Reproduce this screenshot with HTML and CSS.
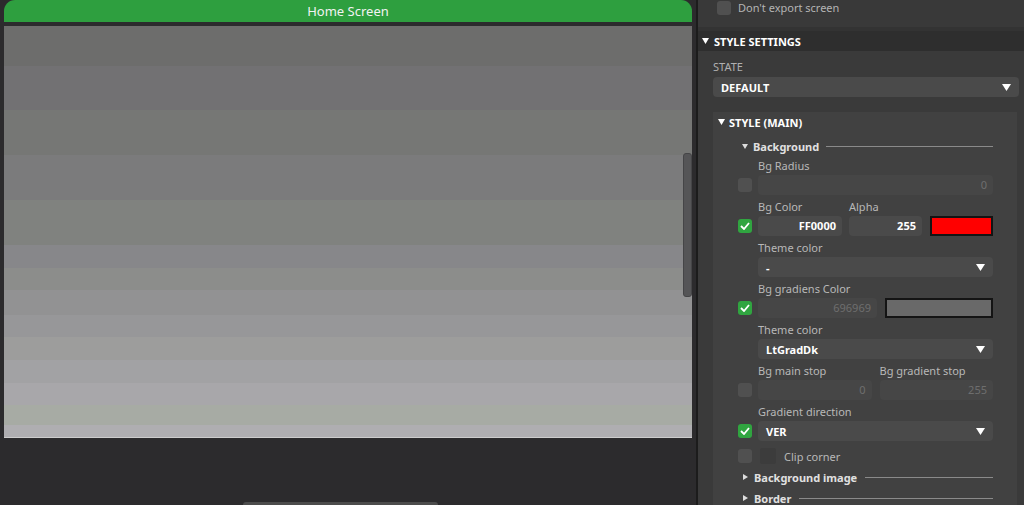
FILE: index.html
```html
<!DOCTYPE html>
<html lang="en">
<head>
    <meta charset="UTF-8">
    <title>Screen Editor</title>
    <link rel="stylesheet" href="styles.css">
</head>
<body>

    <!-- Preview area -->
    <div class="stage">
        <div class="screen-title">Home Screen</div>
        <div class="screen-canvas"></div>
        <div class="vscroll"></div>
        <div class="hscroll"></div>
    </div>

    <div class="divider"></div>

    <!-- Properties panel -->
    <div class="panel">
        <div class="export-row">
            <span class="check"></span>
            <span class="export-label">Don't export screen</span>
        </div>

        <div class="section-head">
            <svg class="tri" width="7" height="6" viewBox="0 0 7 6"><polygon points="0,0 7,0 3.5,6" fill="#fff"/></svg>
            <span>STYLE SETTINGS</span>
        </div>

        <div class="section-body">
            <div class="state-label">STATE</div>
            <div class="select state-select">
                <span>DEFAULT</span>
                <svg width="9" height="7" viewBox="0 0 9 7"><polygon points="0,0 9,0 4.5,7" fill="#fff"/></svg>
            </div>

            <div class="style-box">
                <div class="style-head">
                    <svg class="tri" width="7" height="6" viewBox="0 0 7 6"><polygon points="0,0 7,0 3.5,6" fill="#fff"/></svg>
                    <span>STYLE (MAIN)</span>
                </div>

                <div class="group-head">
                    <svg class="tri" width="6" height="5" viewBox="0 0 6 5"><polygon points="0,0 6,0 3,5" fill="#ddd"/></svg>
                    <span>Background</span>
                    <div class="rule"></div>
                </div>

                <!-- Bg Radius -->
                <div class="field first">
                    <span class="check"></span>
                    <div class="cells">
                        <div class="cell">
                            <div class="label">Bg Radius</div>
                            <div class="input dim">0</div>
                        </div>
                    </div>
                </div>

                <!-- Bg Color -->
                <div class="field">
                    <span class="check on">
                        <svg width="10" height="8" viewBox="0 0 10 8"><polyline points="1,4 4,7 9,1" fill="none" stroke="#fff" stroke-width="1.8"/></svg>
                    </span>
                    <div class="cells">
                        <div class="cell w-hex">
                            <div class="label">Bg Color</div>
                            <div class="input">FF0000</div>
                        </div>
                        <div class="cell w-alpha">
                            <div class="label">Alpha</div>
                            <div class="input">255</div>
                        </div>
                        <div class="cell grow">
                            <div class="label"></div>
                            <div class="swatch red"></div>
                        </div>
                    </div>
                </div>

                <!-- Theme color -->
                <div class="field">
                    <span></span>
                    <div class="cells">
                        <div class="cell">
                            <div class="label">Theme color</div>
                            <div class="select">
                                <span>-</span>
                                <svg width="9" height="7" viewBox="0 0 9 7"><polygon points="0,0 9,0 4.5,7" fill="#fff"/></svg>
                            </div>
                        </div>
                    </div>
                </div>

                <!-- Bg gradient color -->
                <div class="field">
                    <span class="check on">
                        <svg width="10" height="8" viewBox="0 0 10 8"><polyline points="1,4 4,7 9,1" fill="none" stroke="#fff" stroke-width="1.8"/></svg>
                    </span>
                    <div class="cells">
                        <div class="cell w-grad">
                            <div class="label">Bg gradiens Color</div>
                            <div class="input dim">696969</div>
                        </div>
                        <div class="cell grow">
                            <div class="label"></div>
                            <div class="swatch gray"></div>
                        </div>
                    </div>
                </div>

                <!-- Theme color 2 -->
                <div class="field">
                    <span></span>
                    <div class="cells">
                        <div class="cell">
                            <div class="label">Theme color</div>
                            <div class="select">
                                <span>LtGradDk</span>
                                <svg width="9" height="7" viewBox="0 0 9 7"><polygon points="0,0 9,0 4.5,7" fill="#fff"/></svg>
                            </div>
                        </div>
                    </div>
                </div>

                <!-- Stops -->
                <div class="field">
                    <span class="check"></span>
                    <div class="cells">
                        <div class="cell">
                            <div class="label">Bg main stop</div>
                            <div class="input dim">0</div>
                        </div>
                        <div class="cell">
                            <div class="label">Bg gradient stop</div>
                            <div class="input dim">255</div>
                        </div>
                    </div>
                </div>

                <!-- Gradient direction -->
                <div class="field">
                    <span class="check on">
                        <svg width="10" height="8" viewBox="0 0 10 8"><polyline points="1,4 4,7 9,1" fill="none" stroke="#fff" stroke-width="1.8"/></svg>
                    </span>
                    <div class="cells">
                        <div class="cell">
                            <div class="label">Gradient direction</div>
                            <div class="select">
                                <span>VER</span>
                                <svg width="9" height="7" viewBox="0 0 9 7"><polygon points="0,0 9,0 4.5,7" fill="#fff"/></svg>
                            </div>
                        </div>
                    </div>
                </div>

                <!-- Clip corner -->
                <div class="clip-row">
                    <span class="check"></span>
                    <span class="clip-box"></span>
                    <span class="clip-label">Clip corner</span>
                </div>

                <div class="group-head closed">
                    <svg class="tri" width="5" height="6" viewBox="0 0 5 6"><polygon points="0,0 5,3 0,6" fill="#ddd"/></svg>
                    <span>Background image</span>
                    <div class="rule"></div>
                </div>
                <div class="group-head closed">
                    <svg class="tri" width="5" height="6" viewBox="0 0 5 6"><polygon points="0,0 5,3 0,6" fill="#ddd"/></svg>
                    <span>Border</span>
                    <div class="rule"></div>
                </div>
            </div>
        </div>
    </div>

</body>
</html>
```

FILE: styles.css
```css
/* Global */
* {
    margin: 0;
    padding: 0;
    box-sizing: border-box;
    font-family: 'Noto Sans', 'Open Sans', sans-serif;
}

body {
    background: #2c2b2d;
    display: flex;
    height: 505px;
    overflow: hidden;
}

/* PREVIEW */
.stage {
    position: relative;
    width: 696px;
    padding: 0 4px;
}

.screen-title {
    height: 22px;
    background: #2e9f3f;
    border-radius: 11px 11px 0 0;
    color: #f2f2f2;
    font-size: 13px;
    line-height: 22px;
    text-align: center;
}

.screen-canvas {
    margin-top: 4px;
    height: 412px;
    border-bottom: 1px solid #cdcdcd;
    background: linear-gradient(to bottom,
        #6d6d6c 0, #6d6d6c 40px,
        #727173 40px, #727173 84px,
        #767775 84px, #767775 129px,
        #7b7b7c 129px, #7b7b7c 174px,
        #80827f 174px, #80827f 219px,
        #87878a 219px, #87878a 242px,
        #8c8d8b 242px, #8c8d8b 264px,
        #929293 264px, #929293 289px,
        #979799 289px, #979799 311px,
        #9d9d9c 311px, #9d9d9c 334px,
        #a2a2a4 334px, #a2a2a4 357px,
        #a8a7aa 357px, #a8a7aa 379px,
        #a7aba4 379px, #a7aba4 399px,
        #afaeb1 399px);
}

.vscroll {
    position: absolute;
    left: 683px;
    top: 153px;
    width: 9px;
    height: 144px;
    background: #555557;
    border: 1px solid #454547;
    border-radius: 3px;
}

.hscroll {
    position: absolute;
    left: 243px;
    top: 502px;
    width: 195px;
    height: 6px;
    background: #4c4c4c;
    border-radius: 3px;
}

.divider {
    width: 2px;
    background: #1c1c1c;
}

/* PANEL */
.panel {
    flex: 1;
    background: #3a3a3a;
    color: #b8b8b8;
    font-size: 11px;
    overflow: hidden;
}

.export-row {
    height: 31px;
    display: flex;
    align-items: flex-start;
    gap: 7px;
    padding: 1px 0 0 19px;
    background: linear-gradient(to bottom, #393939 0, #393939 27px, #333 27px);
}

.export-label {
    font-size: 11px;
    line-height: 14px;
    color: #b4b4b4;
}

.section-head {
    height: 20px;
    background: #2e2e2e;
    display: flex;
    align-items: center;
    gap: 5px;
    padding-left: 4px;
    color: #fff;
    font-weight: 700;
    font-size: 11px;
}

.section-body {
    padding: 9px 5px 0 15px;
}

.state-label {
    height: 14px;
    line-height: 14px;
    color: #b0b0b0;
}

/* SELECTS AND INPUTS */
.select {
    height: 20px;
    background: #4a4a4a;
    border-radius: 4px;
    display: flex;
    align-items: center;
    justify-content: space-between;
    padding: 0 8px;
    color: #fff;
    font-weight: 700;
}

.state-select {
    margin-top: 3px;
    padding-right: 8px;
}

.input {
    height: 20px;
    background: #4a4a4a;
    border-radius: 4px;
    padding-right: 6px;
    text-align: right;
    line-height: 20px;
    color: #fff;
    font-weight: 700;
}

.input.dim {
    background: #464646;
    color: #6e6e6e;
    font-weight: 400;
}

.swatch {
    height: 20px;
    border: 2px solid #141414;
}

.swatch.red {
    background: #ff0000;
}

.swatch.gray {
    background: #696969;
}

/* STYLE BOX */
.style-box {
    margin: 15px 2px 0 0;
    background: #414141;
    padding: 0 24px 20px 25px;
}

.style-head {
    height: 20px;
    display: flex;
    align-items: center;
    gap: 4px;
    margin-left: -20px;
    color: #fff;
    font-weight: 700;
}

.group-head {
    height: 16px;
    margin-top: 6px;
    display: flex;
    align-items: center;
    gap: 5px;
    padding-left: 4px;
    color: #e0e0e0;
    font-weight: 700;
}

.group-head.closed {
    height: 20px;
    margin-top: 1px;
    gap: 6px;
    padding-left: 5px;
}

.rule {
    flex: 1;
    height: 1px;
    background: #8a8a8a;
    margin-left: 2px;
}

/* FIELDS */
.field {
    display: flex;
    align-items: flex-end;
    gap: 6px;
    margin-top: 5px;
}

.field.first {
    margin-top: 5px;
}

.field > span {
    width: 14px;
    flex-shrink: 0;
    margin-bottom: 3px;
}

.cells {
    flex: 1;
    display: flex;
    gap: 8px;
}

.cell {
    flex: 1;
}

.cell.w-hex {
    flex: 0 0 84px;
    margin-right: -1px;
}

.cell.w-alpha {
    flex: 0 0 73px;
}

.cell.w-grad {
    flex: 0 0 119px;
}

.label {
    height: 14px;
    line-height: 14px;
    margin-bottom: 2px;
    color: #b8b8b8;
    white-space: nowrap;
}

/* CHECKBOX */
.check {
    width: 14px;
    height: 14px;
    border-radius: 3px;
    background: #505050;
    display: flex;
    align-items: center;
    justify-content: center;
}

.check.on {
    background: #30a540;
}

.clip-row {
    display: flex;
    align-items: center;
    height: 20px;
    margin-top: 5px;
}

.clip-box {
    width: 16px;
    height: 16px;
    margin-left: 8px;
    background: #3c3c3c;
    border-radius: 2px;
}

.clip-label {
    margin-left: 8px;
    color: #b8b8b8;
}
```
